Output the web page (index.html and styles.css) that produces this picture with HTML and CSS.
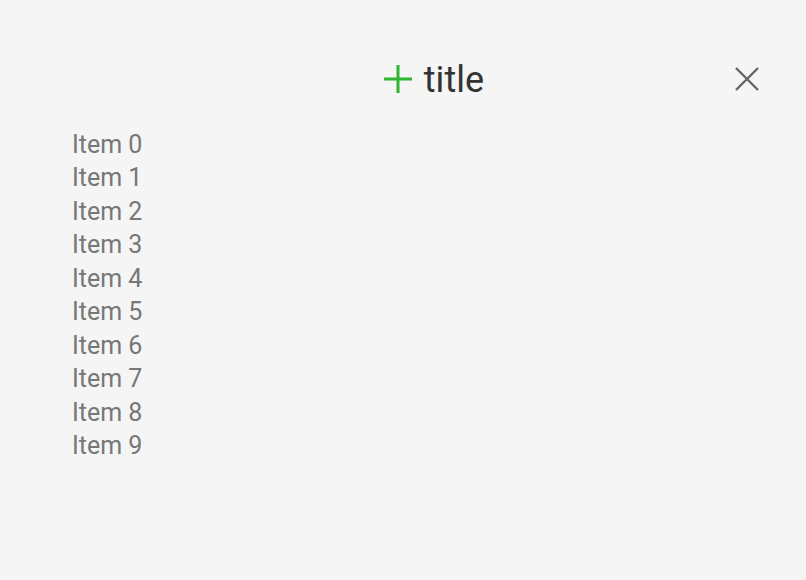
FILE: index.html
```html
<!DOCTYPE html>
<html>
<head>
<meta charset="utf-8">
<link rel="stylesheet" href="styles.css">
</head>
<body>
<div class="dialog">
  <div class="header">
    <div class="title-group">
      <svg class="plus" width="28" height="28" viewBox="0 0 28 28"><path d="M14 0V28M0 14H28" stroke="#2fb52f" stroke-width="3" fill="none"/></svg>
      <span class="title">title</span>
    </div>
    <svg class="close" width="24" height="24" viewBox="0 0 24 24"><path d="M1 1L23 23M23 1L1 23" stroke="#666" stroke-width="2.4" fill="none"/></svg>
  </div>
  <ul class="list">
    <li>Item 0</li>
    <li>Item 1</li>
    <li>Item 2</li>
    <li>Item 3</li>
    <li>Item 4</li>
    <li>Item 5</li>
    <li>Item 6</li>
    <li>Item 7</li>
    <li>Item 8</li>
    <li>Item 9</li>
  </ul>
</div>
</body>
</html>
```
FILE: styles.css
```css
html, body {
  margin: 0;
  padding: 0;
  background: #f5f5f5;
  font-family: Roboto, "Liberation Sans", sans-serif;
}
.dialog {
  width: 806px;
  height: 580px;
  box-sizing: border-box;
  padding: 56px 47px 0 72px;
}
.header {
  display: flex;
  align-items: center;
  justify-content: flex-end;
  height: 46px;
}
.title-group {
  display: flex;
  align-items: center;
  gap: 12px;
  margin-right: 251px;
}
.title {
  font-size: 36px;
  color: #333;
  line-height: 46px;
  position: relative;
  top: 1px;
}
.close {
  display: block;
}
.list {
  list-style: none;
  margin: 26px 0 0 0;
  padding: 0;
}
.list li {
  font-size: 25px;
  line-height: 33.44px;
  color: #777;
}
```
